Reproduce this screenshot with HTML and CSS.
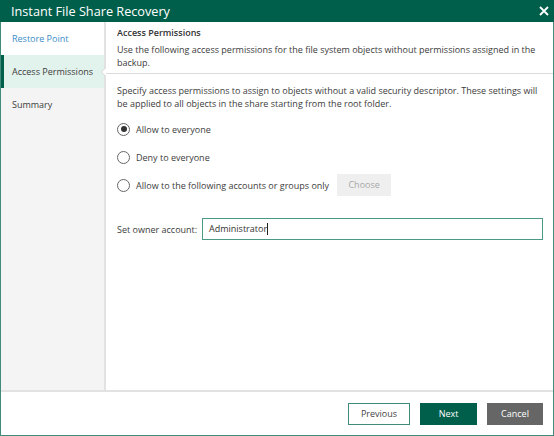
FILE: index.html
```html
<!DOCTYPE html>
<html>
<head>
<meta charset="utf-8">
<link rel="stylesheet" href="styles.css">
</head>
<body>
<div class="window">
  <div class="titlebar">
    <span class="title">Instant File Share Recovery</span>
    <svg class="close" width="10" height="10" viewBox="0 0 10 10"><path d="M1 1L9 9M9 1L1 9" stroke="#fff" stroke-width="1.8"/></svg>
  </div>
  <div class="main">
    <div class="sidebar">
      <div class="step done">Restore Point</div>
      <div class="step active">Access Permissions<span class="notch"></span></div>
      <div class="step">Summary</div>
    </div>
    <div class="content">
      <div class="header">
        <div class="h-title">Access Permissions</div>
        <div class="h-desc">Use the following access permissions for the file system objects without permissions assigned in the backup.</div>
      </div>
      <div class="body">
        <p class="intro">Specify access permissions to assign to objects without a valid security descriptor. These settings will be applied to all objects in the share starting from the root folder.</p>
        <div class="radios">
          <div class="radio-row"><span class="radio checked"></span><span>Allow to everyone</span></div>
          <div class="radio-row"><span class="radio"></span><span>Deny to everyone</span></div>
          <div class="radio-row"><span class="radio"></span><span>Allow to the following accounts or groups only</span><span class="btn-choose">Choose</span></div>
        </div>
        <div class="owner-row">
          <span class="owner-label">Set owner account:</span>
          <div class="input">Administrator<span class="caret"></span></div>
        </div>
      </div>
    </div>
  </div>
  <div class="footer">
    <span class="btn btn-prev">Previous</span>
    <span class="btn btn-next">Next</span>
    <span class="btn btn-cancel">Cancel</span>
  </div>
</div>
</body>
</html>
```
FILE: styles.css
```css
html, body {
  margin: 0;
  padding: 0;
  background: #fff;
}
body {
  font-family: "Open Sans", "Liberation Sans", sans-serif;
  font-size: 9px;
  color: #3c3c3c;
}
.window {
  width: 554px;
  height: 436px;
  box-sizing: border-box;
  border: 1px solid #3e8c79;
  border-top: none;
  display: flex;
  flex-direction: column;
  background: #fff;
}
.titlebar {
  height: 22px;
  background: #005f4b;
  margin: 0 -1px;
  display: flex;
  align-items: center;
  justify-content: space-between;
  padding: 0 5px 0 11px;
  flex-shrink: 0;
}
.title {
  color: #fff;
  font-size: 12.7px;
  line-height: 22px;
}
.close {
  display: block;
}
.main {
  flex: 1;
  display: flex;
  min-height: 0;
}
.sidebar {
  width: 103px;
  background: #f4f4f4;
  border-right: 2px solid #e2e2e2;
  flex-shrink: 0;
}
.step {
  height: 33px;
  line-height: 33px;
  padding-left: 11px;
  position: relative;
  white-space: nowrap;
}
.step.done {
  background: #fff;
  color: #3a8cc6;
}
.step.active {
  background: #e2f2ec;
  border-left: 3px solid #005f4b;
  padding-left: 8px;
}
.notch {
  position: absolute;
  right: -2px;
  top: 12px;
  width: 0;
  height: 0;
  border-top: 5px solid transparent;
  border-bottom: 5px solid transparent;
  border-right: 5px solid #d8d8d8;
}
.notch::after {
  content: "";
  position: absolute;
  right: -5px;
  top: -4px;
  border-top: 4px solid transparent;
  border-bottom: 4px solid transparent;
  border-right: 4px solid #fff;
}
.content {
  flex: 1;
  display: flex;
  flex-direction: column;
  min-width: 0;
}
.header {
  height: 52px;
  border-bottom: 1px solid #dcdcdc;
  padding: 4px 10px 0 11px;
  box-sizing: border-box;
}
.h-title {
  font-weight: 600;
  line-height: 14px;
  color: #333;
}
.h-desc {
  margin-top: 3px;
  line-height: 13px;
}
.body {
  padding: 10px 10px 0 11px;
}
.intro {
  margin: 0;
  line-height: 13px;
}
.radios {
  margin-top: 5px;
  display: flex;
  flex-direction: column;
}
.radio-row {
  height: 28px;
  display: flex;
  align-items: center;
  white-space: nowrap;
}
.radio {
  width: 11px;
  height: 11px;
  border: 1px solid #666;
  border-radius: 50%;
  margin-right: 6px;
  position: relative;
  flex-shrink: 0;
  background: #fff;
}
.radio.checked::after {
  content: "";
  position: absolute;
  left: 2.5px;
  top: 2.5px;
  width: 6px;
  height: 6px;
  border-radius: 50%;
  background: #333;
}
.btn-choose {
  margin-left: 8px;
  width: 54px;
  height: 22px;
  line-height: 22px;
  text-align: center;
  background: #efefef;
  color: #a8a8a8;
}
.owner-row {
  margin-top: 19px;
  display: flex;
  align-items: center;
}
.owner-label {
  width: 85px;
  flex-shrink: 0;
  white-space: nowrap;
}
.input {
  flex: 1;
  height: 22px;
  box-sizing: border-box;
  border: 1px solid #4a9886;
  line-height: 20px;
  padding-left: 6px;
  color: #333;
  display: flex;
  align-items: center;
}
.caret {
  display: inline-block;
  width: 1px;
  height: 12px;
  background: #222;
}
.footer {
  height: 45px;
  flex-shrink: 0;
  border-top: 2px solid #e2e2e2;
  box-sizing: border-box;
  display: flex;
  justify-content: flex-end;
  align-items: center;
  gap: 10px;
  padding: 0 10px 0 0;
}
.btn {
  height: 22px;
  box-sizing: border-box;
  line-height: 20px;
  text-align: center;
}
.btn-prev {
  width: 62px;
  border: 1px solid #3e8c79;
  color: #444;
  background: #fff;
}
.btn-next {
  width: 57px;
  background: #005f4b;
  color: #fff;
  border: 1px solid #005f4b;
}
.btn-cancel {
  width: 56px;
  background: #666;
  color: #fff;
  border: 1px solid #666;
}
```
